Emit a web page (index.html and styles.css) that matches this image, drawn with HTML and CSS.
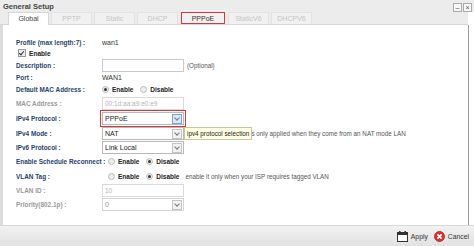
FILE: index.html
```html
<!DOCTYPE html>
<html lang="en">
<head>
	<meta charset="UTF-8">
	<title>General Setup</title>
	<link rel="stylesheet" href="styles.css">
</head>
<body>
	<div class="window">
		<div class="titlebar">
			<span class="title">General Setup</span>
			<div class="tools">
				<span class="tool">&ndash;</span>
				<span class="tool">&times;</span>
			</div>
		</div>
		<div class="tabs">
			<span class="tab active">Global</span>
			<span class="tab">PPTP</span>
			<span class="tab">Static</span>
			<span class="tab">DHCP</span>
			<span class="tab marked">PPPoE</span>
			<span class="tab">StaticV6</span>
			<span class="tab">DHCPV6</span>
		</div>
		<div class="content">
			<div class="form">
				<div class="label">Profile (max length:7) :</div>
				<div class="field">wan1</div>

				<div class="wide"><span class="check"></span><b class="check_text">Enable</b></div>

				<div class="label">Description :</div>
				<div class="field"><span class="input"></span><span class="note">(Optional)</span></div>

				<div class="label">Port :</div>
				<div class="field">WAN1</div>

				<div class="label">Default MAC Address :</div>
				<div class="field">
					<span class="radio on"></span><b class="opt">Enable</b>
					<span class="radio"></span><b class="opt">Disable</b>
				</div>

				<div class="label off">MAC Address :</div>
				<div class="field"><span class="input disabled">00:1d:aa:a9:e0:e9</span></div>

				<div class="label">IPv4 Protocol :</div>
				<div class="field"><span class="select marked_select">PPPoE<i class="arrow hover"></i></span></div>

				<div class="label">IPv4 Mode :</div>
				<div class="field tip_host">
					<span class="select">NAT<i class="arrow"></i></span>
					<span class="note hint">is only applied when they come from an NAT mode LAN</span>
					<span class="tooltip">ipv4 protocol selection</span>
				</div>

				<div class="label">IPv6 Protocol :</div>
				<div class="field"><span class="select">Link Local<i class="arrow"></i></span></div>

				<div class="label">Enable Schedule Reconnect :</div>
				<div class="field indent">
					<span class="radio"></span><b class="opt">Enable</b>
					<span class="radio on"></span><b class="opt">Disable</b>
				</div>

				<div class="label">VLAN Tag :</div>
				<div class="field indent">
					<span class="radio"></span><b class="opt">Enable</b>
					<span class="radio on"></span><b class="opt last">Disable</b>
					<span class="note">enable it only when your ISP requires tagged VLAN</span>
				</div>

				<div class="label off">VLAN ID :</div>
				<div class="field"><span class="input disabled">10</span></div>

				<div class="label off">Priority(802.1p) :</div>
				<div class="field"><span class="select disabled">0<i class="arrow"></i></span></div>
			</div>
		</div>
		<div class="footer">
			<span class="btn">
				<svg width="11" height="11" viewBox="0 0 11 11">
					<rect x="0.5" y="1.5" width="10" height="9" fill="#fff" stroke="#333"/>
					<rect x="0.5" y="1.5" width="10" height="2.5" fill="#333"/>
					<rect x="2" y="0" width="1.5" height="3" fill="#333"/>
					<rect x="7.5" y="0" width="1.5" height="3" fill="#333"/>
				</svg>
				Apply
			</span>
			<span class="btn">
				<svg width="11" height="11" viewBox="0 0 11 11">
					<circle cx="5.5" cy="5.5" r="5" fill="#d9342b" stroke="#a8211b" stroke-width="0.8"/>
					<path d="M3.4 3.4 L7.6 7.6 M7.6 3.4 L3.4 7.6" stroke="#fff" stroke-width="1.6"/>
				</svg>
				Cancel
			</span>
		</div>
	</div>
</body>
</html>
```

FILE: styles.css
```css
html,body{
	margin:0;
	padding:0;
}
body{
	width:474px;
	height:246px;
	overflow:hidden;
	background-color:#fff;
	font-family:"Liberation Sans", Arial, sans-serif;
	font-size:7px;
	color:#333;
}
.window{
	height:246px;
	display:flex;
	flex-direction:column;
}
.titlebar{
	height:12px;
	display:flex;
	align-items:center;
	justify-content:space-between;
	padding:0 2px 0 3px;
	background:#ececec;
}
.title{
	font-weight:bold;
	font-size:7.5px;
	color:#444;
}
.tools{
	display:flex;
	gap:1px;
	padding-top:2px;
}
.tool{
	width:7px;
	height:7px;
	border:1px solid #aaa;
	background:#f6f6f6;
	font-size:7px;
	line-height:7px;
	text-align:center;
	color:#555;
}
.tabs{
	height:12px;
	display:flex;
	gap:2px;
	padding-left:8px;
	background:#ececec;
	border-bottom:1px solid #d6d6d6;
	margin-right:6px;
}
.tab{
	width:41px;
	height:12px;
	line-height:12px;
	text-align:center;
	background:#f1f1f1;
	border:1px solid #e2e2e2;
	border-bottom:none;
	box-sizing:border-box;
	color:#c4c4c4;
}
.tab.active{
	background:#fff;
	color:#444;
	border-color:#d6d6d6;
	height:13px;
}
.tab.marked{
	width:44px;
	margin:0 1px;
	color:#333;
	border:1.5px solid #d8373d;
}
.content{
	flex:1;
	border-left:3px solid #dcdcdc;
	border-right:1px solid #9a9a9a;
	margin-right:5px;
	padding:12px 0 0 13px;
	position:relative;
}
.form{
	display:grid;
	grid-template-columns:86px auto;
	grid-template-rows:10px 12px 12.5px 11px 13px 15px 15.5px 14px 14px 15px 14px 14px 14px;
	align-items:center;
}
.label{
	font-weight:bold;
	font-size:6.4px;
	color:#1f3f6d;
	white-space:nowrap;
}
.label.off{
	color:#9a9a9a;
}
.field{
	display:flex;
	align-items:center;
	white-space:nowrap;
}
.field.indent{
	padding-left:6px;
}
.wide{
	grid-column:1 / 3;
	display:flex;
	align-items:center;
	padding-left:2px;
}
.check{
	width:6px;
	height:6px;
	border:1px solid #999;
	background:#e9eef6;
	position:relative;
	margin-right:3px;
}
.check::after{
	content:"";
	position:absolute;
	left:1px;
	top:0;
	width:2px;
	height:4px;
	border:solid #333;
	border-width:0 1px 1px 0;
	transform:rotate(40deg);
}
.check_text{
	color:#222;
	font-size:6.6px;
}
.input{
	width:78px;
	height:11px;
	border:1px solid #c8c8c8;
	line-height:11px;
	padding-left:2px;
	box-sizing:content-box;
	background:#fff;
	font-size:6.5px;
}
.input.disabled{
	color:#b4b4b4;
	border-color:#dadada;
}
.note{
	color:#555;
	font-size:6.3px;
	margin-left:3px;
}
.select{
	width:78px;
	height:11px;
	line-height:11px;
	border:1px solid #b8b8b8;
	padding-left:2px;
	position:relative;
	color:#222;
}
.select.disabled{
	color:#999;
	border-color:#d4d4d4;
}
.marked_select{
	outline:1px solid #d8373d;
	outline-offset:1px;
}
.arrow{
	position:absolute;
	right:1px;
	top:1px;
	width:8px;
	height:8px;
	border:1px solid #c4c4c4;
	background:#f2f2f2;
}
.arrow::after{
	content:"";
	position:absolute;
	left:2px;
	top:1px;
	width:3px;
	height:3px;
	border:solid #777;
	border-width:0 1px 1px 0;
	transform:rotate(45deg);
}
.arrow.hover{
	background:#dbe8f6;
	border-color:#7aa2d0;
}
.tip_host{
	position:relative;
}
.hint{
	margin-left:66px;
}
.tooltip{
	position:absolute;
	left:82px;
	top:0;
	padding:0 2px;
	height:11px;
	line-height:11px;
	background:#ffffe1;
	border:1px solid #c8c8a0;
	color:#222;
	font-size:6.3px;
}
.radio{
	width:5px;
	height:5px;
	border-radius:50%;
	border:1px solid #bbb;
	background:#eee;
	margin-right:3px;
	position:relative;
}
.radio.on::after{
	content:"";
	position:absolute;
	left:1px;
	top:1px;
	width:3px;
	height:3px;
	border-radius:50%;
	background:#333;
}
.opt{
	color:#222;
	font-size:6.5px;
	margin-right:7px;
}
.opt.last{
	margin-right:3px;
}
.footer{
	height:20px;
	display:flex;
	align-items:center;
	justify-content:flex-end;
	gap:6px;
	padding-right:5px;
	background:linear-gradient(#f1f1f1, #e2e2e2);
	border-top:1px solid #d8d8d8;
}
.btn{
	display:flex;
	align-items:center;
	gap:3px;
	color:#333;
	font-size:6.8px;
}
```
